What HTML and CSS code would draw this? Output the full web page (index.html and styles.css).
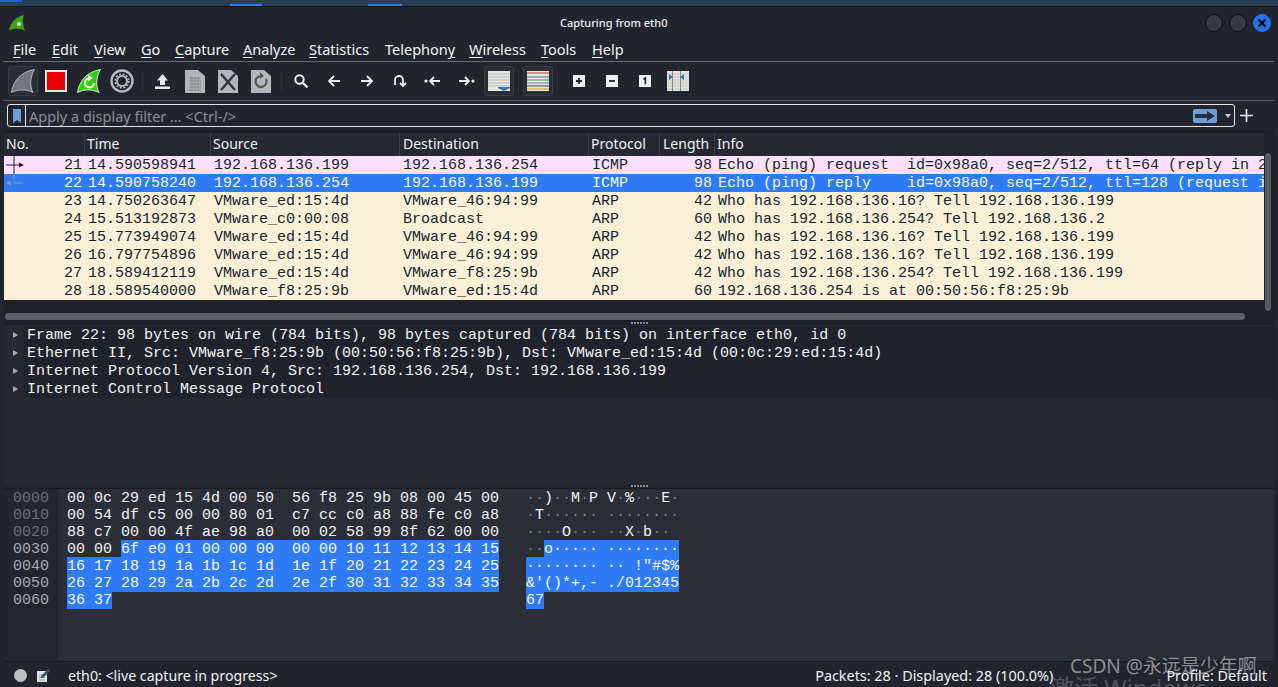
FILE: index.html
```html
<!DOCTYPE html>
<html lang="en">
<head>
<meta charset="utf-8">
<title>Capturing from eth0</title>
<link rel="stylesheet" href="styles.css">
</head>
<body>
<div class="strip"><i class="s1"></i><i class="s2"></i><i class="s3"></i></div>
<div class="win">
  <div class="titlebar">
    <svg class="logo" width="16" height="16" viewBox="0 0 16 16"><path d="M0 15.500C1 9 6 2 15 0c-2 5-1 11 1 15.500C10 13 5 13 0 15.500z" fill="#3fa420"/><circle cx="10" cy="9" r="2" fill="#d8ecd2"/></svg>
    <span class="title">Capturing from eth0</span>
    <div class="wbtns"><span class="wbtn"></span><span class="wbtn"></span><span class="wbtn close"><svg width="10" height="10" viewBox="0 0 10 10"><path d="M1.500 1.500l7 7M8.500 1.500l-7 7" stroke="#000" stroke-width="2"/></svg></span></div>
  </div>
  <div class="menubar">
    <span><u>F</u>ile</span><span><u>E</u>dit</span><span><u>V</u>iew</span><span><u>G</u>o</span><span><u>C</u>apture</span><span><u>A</u>nalyze</span><span><u>S</u>tatistics</span><span>Telephon<u>y</u></span><span><u>W</u>ireless</span><span><u>T</u>ools</span><span><u>H</u>elp</span>
  </div>
  <div class="toolbar">
    <span class="tb framed first"><svg width="24" height="24" viewBox="0 0 24 24"><path d="M.5 23.500C2 13 9 3 23.500.5 19 8 18.500 17 22 23.500 15 20 7 20 .5 23.500z" fill="#74777d" stroke="#b5b6b9"/></svg></span>
    <span class="tb"><svg width="22" height="22" viewBox="0 0 22 22"><rect width="22" height="22" fill="#e8e8e8"/><rect x="2" y="2" width="18" height="18" fill="#e60000"/></svg></span>
    <span class="tb"><svg width="24" height="24" viewBox="0 0 24 24"><path d="M.5 23.500C2 13 9 3 23.500.5 19 8 18.500 17 22 23.500 15 20 7 20 .5 23.500z" fill="#2fd011" stroke="#d9e8d2"/><path d="M17 14a4.500 4.500 0 1 1-5-4.500" stroke="#eef8e8" stroke-width="2.200" fill="none"/><path d="M11 5.500l5 3.500-5 3.500z" fill="#eef8e8"/></svg></span>
    <span class="tb"><svg width="24" height="24" viewBox="0 0 24 24"><circle cx="12" cy="12" r="10.500" fill="none" stroke="#b9babd" stroke-width="2.400"/><circle cx="12" cy="12" r="5" fill="none" stroke="#b9babd" stroke-width="2"/><circle cx="12" cy="12" r="6.800" fill="none" stroke="#b9babd" stroke-width="1.600" stroke-dasharray="2 1.600"/></svg></span>
    <b class="sep"></b>
    <span class="tb"><svg width="15" height="15" viewBox="0 0 15 15"><path d="M7.500 0l5.500 6.500H10V11H5V6.500H2z M0 12.500h15V15H0z" fill="#e8e8e8"/></svg></span>
    <span class="tb"><svg width="20" height="24" viewBox="0 0 20 24"><path d="M0 1h13l7 6v17H0z" fill="#b4b6b9"/><path d="M4 9h12M4 12h12M4 15h12M4 18h12M4 21h12M7 8v14M10 8v14M13 8v14" stroke="#85878b" stroke-width="1"/></svg></span>
    <span class="tb"><svg width="20" height="24" viewBox="0 0 20 24"><path d="M0 1h13l7 6v17H0z" fill="#b4b6b9"/><path d="M3 5l14 16M17 5L3 21" stroke="#33353a" stroke-width="2.400"/></svg></span>
    <span class="tb"><svg width="20" height="24" viewBox="0 0 20 24"><path d="M0 1h13l7 6v17H0z" fill="#b4b6b9"/><path d="M15 10a5.500 5.500 0 1 1-5-3" stroke="#55575b" stroke-width="2.200" fill="none"/><path d="M9 3l4 4-4 3z" fill="#55575b"/></svg></span>
    <b class="sep"></b>
    <span class="tb"><svg width="16" height="16" viewBox="0 0 16 16"><circle cx="6.500" cy="6.500" r="4.200" fill="none" stroke="#eee" stroke-width="2"/><path d="M10 10l4.500 4.500" stroke="#eee" stroke-width="2.400"/></svg></span>
    <span class="tb"><svg width="14" height="14" viewBox="0 0 14 14"><path d="M13 7H2M7 2L2 7l5 5" fill="none" stroke="#eee" stroke-width="1.800"/></svg></span>
    <span class="tb"><svg width="14" height="14" viewBox="0 0 14 14"><path d="M1 7h11M7 2l5 5-5 5" fill="none" stroke="#eee" stroke-width="1.800"/></svg></span>
    <span class="tb"><svg width="14" height="14" viewBox="0 0 14 14"><path d="M2 11V6a4 4 0 0 1 8 0v5M7 9l3 3 3-3" fill="none" stroke="#eee" stroke-width="1.800"/></svg></span>
    <span class="tb"><svg width="18" height="14" viewBox="0 0 18 14"><circle cx="2" cy="7" r="1.600" fill="#eee"/><path d="M16 7H6M10 3L6 7l4 4" fill="none" stroke="#eee" stroke-width="1.800"/></svg></span>
    <span class="tb"><svg width="18" height="14" viewBox="0 0 18 14"><circle cx="16" cy="7" r="1.600" fill="#eee"/><path d="M2 7h10M8 3l4 4-4 4" fill="none" stroke="#eee" stroke-width="1.800"/></svg></span>
    <span class="tb framed big"><svg width="22" height="20" viewBox="0 0 22 20"><rect width="22" height="20" fill="#e6e6df"/><path d="M0 3h22M0 6h22M0 9h22M0 12h22M0 15h22" stroke="#bdbdb6"/><path d="M10 16h12v1l-6 3-6-3z" fill="#3a6fb5"/></svg></span>
    <b class="sep wide"></b>
    <span class="tb framed"><svg width="22" height="20" viewBox="0 0 22 20"><rect width="22" height="20" fill="#e6e6df"/><path d="M0 2h22" stroke="#d33"/><path d="M0 6h22" stroke="#3a6fb5"/><path d="M0 9h22" stroke="#3a9a3a"/><path d="M0 12h22" stroke="#8a6fb5"/><path d="M0 15h22" stroke="#444"/><path d="M0 18h22" stroke="#c89a10"/></svg></span>
    <b class="sep wide"></b>
    <span class="tb"><svg width="12" height="12" viewBox="0 0 12 12"><rect width="12" height="12" fill="#eee"/><path d="M3 6h6M6 3v6" stroke="#222" stroke-width="1.800"/></svg></span>
    <span class="tb"><svg width="12" height="12" viewBox="0 0 12 12"><rect width="12" height="12" fill="#eee"/><path d="M3 6h6" stroke="#222" stroke-width="1.800"/></svg></span>
    <span class="tb"><svg width="12" height="12" viewBox="0 0 12 12"><rect width="12" height="12" fill="#eee"/><path d="M4.400 4.200L6.400 3v6.200" stroke="#222" stroke-width="1.600" fill="none"/></svg></span>
    <span class="tb"><svg width="22" height="20" viewBox="0 0 22 20"><rect width="22" height="20" fill="#e6e6df"/><path d="M0 3h22M0 6h22M0 9h22M0 12h22M0 15h22M0 18h22" stroke="#c4c4bc"/><path d="M5.500 0v20M13.500 0v20" stroke="#888" stroke-width="1"/><path d="M2 3l4 3-4 3zM17 3l-4 3 4 3z" fill="#3a6fb5"/></svg></span>
  </div>
  <div class="filterrow">
    <div class="filter">
      <span class="bookmark"><svg width="8" height="14" viewBox="0 0 8 14"><path d="M0 0h8v14L4 11l-4 3z" fill="#6d9fd6"/></svg></span>
      <span class="ph">Apply a display filter … &lt;Ctrl-/&gt;</span>
      <span class="apply"><svg width="20" height="10" viewBox="0 0 20 10"><path d="M0 3h12V0l8 5-8 5V7H0z" fill="#26303f"/></svg></span>
      <span class="drop"></span>
    </div>
    <svg class="plus" width="13" height="13" viewBox="0 0 13 13"><path d="M6.500 0v13M0 6.500h13" stroke="#eee" stroke-width="1.600"/></svg>
  </div>
  <div class="plist">
    <div class="pmain">
      <div class="head">
        <span>No.</span><span>Time</span><span>Source</span><span>Destination</span><span>Protocol</span><span>Length</span><span>Info</span>
      </div>
      <div class="row icmp"><span class="no"><svg class="mark" width="20" height="18" viewBox="0 0 20 18"><path d="M9 0v18M1 9h16" stroke="#222" stroke-width="1"/><path d="M14 6.500l5 2.500-5 2.500z" fill="#222"/></svg>21</span><span>14.590598941</span><span>192.168.136.199</span><span>192.168.136.254</span><span>ICMP</span><span class="len">98</span><span>Echo (ping) request  id=0x98a0, seq=2/512, ttl=64 (reply in 22)</span></div>
      <div class="row sel"><span class="no"><svg class="mark" width="20" height="18" viewBox="0 0 20 18"><path d="M9 0v9H18" stroke="#8c99ad" stroke-width="1" fill="none"/><path d="M6 6.500l-5 2.500 5 2.500z" fill="#8c99ad"/></svg>22</span><span>14.590758240</span><span>192.168.136.254</span><span>192.168.136.199</span><span>ICMP</span><span class="len">98</span><span>Echo (ping) reply    id=0x98a0, seq=2/512, ttl=128 (request in 21)</span></div>
      <div class="row"><span class="no">23</span><span>14.750263647</span><span>VMware_ed:15:4d</span><span>VMware_46:94:99</span><span>ARP</span><span class="len">42</span><span>Who has 192.168.136.16? Tell 192.168.136.199</span></div>
      <div class="row"><span class="no">24</span><span>15.513192873</span><span>VMware_c0:00:08</span><span>Broadcast</span><span>ARP</span><span class="len">60</span><span>Who has 192.168.136.254? Tell 192.168.136.2</span></div>
      <div class="row"><span class="no">25</span><span>15.773949074</span><span>VMware_ed:15:4d</span><span>VMware_46:94:99</span><span>ARP</span><span class="len">42</span><span>Who has 192.168.136.16? Tell 192.168.136.199</span></div>
      <div class="row"><span class="no">26</span><span>16.797754896</span><span>VMware_ed:15:4d</span><span>VMware_46:94:99</span><span>ARP</span><span class="len">42</span><span>Who has 192.168.136.16? Tell 192.168.136.199</span></div>
      <div class="row"><span class="no">27</span><span>18.589412119</span><span>VMware_ed:15:4d</span><span>VMware_f8:25:9b</span><span>ARP</span><span class="len">42</span><span>Who has 192.168.136.254? Tell 192.168.136.199</span></div>
      <div class="row"><span class="no">28</span><span>18.589540000</span><span>VMware_f8:25:9b</span><span>VMware_ed:15:4d</span><span>ARP</span><span class="len">60</span><span>192.168.136.254 is at 00:50:56:f8:25:9b</span></div>
      <div class="scroll"><div class="thumb"></div></div>
    </div>
    <div class="vbar"><div class="vthumb"></div></div>
  </div>
  <div class="grip"></div>
  <div class="details">
    <div class="dl"><i class="arrow"></i><span>Frame 22: 98 bytes on wire (784 bits), 98 bytes captured (784 bits) on interface eth0, id 0</span></div>
    <div class="dl"><i class="arrow"></i><span>Ethernet II, Src: VMware_f8:25:9b (00:50:56:f8:25:9b), Dst: VMware_ed:15:4d (00:0c:29:ed:15:4d)</span></div>
    <div class="dl"><i class="arrow"></i><span>Internet Protocol Version 4, Src: 192.168.136.254, Dst: 192.168.136.199</span></div>
    <div class="dl"><i class="arrow"></i><span>Internet Control Message Protocol</span></div>
  </div>
  <div class="grip g2"></div>
  <div class="hex">
    <div class="offs"><div>0000</div><div>0010</div><div>0020</div><div class="on">0030</div><div class="on">0040</div><div class="on">0050</div><div class="on">0060</div></div>
    <div class="bytes">
      <div>00 0c 29 ed 15 4d 00 50  56 f8 25 9b 08 00 45 00</div>
      <div>00 54 df c5 00 00 80 01  c7 cc c0 a8 88 fe c0 a8</div>
      <div>88 c7 00 00 4f ae 98 a0  00 02 58 99 8f 62 00 00</div>
      <div>00 00 <mark>6f e0 01 00 00 00  00 00 10 11 12 13 14 15</mark></div>
      <div><mark>16 17 18 19 1a 1b 1c 1d  1e 1f 20 21 22 23 24 25</mark></div>
      <div><mark>26 27 28 29 2a 2b 2c 2d  2e 2f 30 31 32 33 34 35</mark></div>
      <div><mark>36 37</mark></div>
    </div>
    <div class="ascii">
      <div><s>··</s>)<s>··</s>M<s>·</s>P V<s>·</s>%<s>···</s>E<s>·</s></div>
      <div><s>·</s>T<s>······</s> <s>········</s></div>
      <div><s>····</s>O<s>···</s> <s>··</s>X<s>·</s>b<s>··</s></div>
      <div><s>··</s><mark>o····· ········</mark></div>
      <div><mark>········ ·· !"#$%</mark></div>
      <div><mark>&amp;'()*+,- ./012345</mark></div>
      <div><mark>67</mark></div>
    </div>
  </div>
  <div class="status">
    <span class="led"></span>
    <svg class="note" width="13" height="13" viewBox="0 0 13 13"><rect y="2" width="10" height="11" fill="#dfe3e6"/><path d="M2 6h6M2 8.500h6M2 11h6" stroke="#9aa"/><path d="M4 7l7-7 2 2-7 7H4z" fill="#3d5568"/></svg>
    <span class="cap">eth0: &lt;live capture in progress&gt;</span>
    <span class="pk">Packets: 28 · Displayed: 28 (100.0%)</span>
    <span class="pf">Profile: Default</span>
  </div>
</div>
<div class="wm2">激活 Windows</div>
<div class="wm">CSDN @永远是少年啊</div>
</body>
</html>
```
FILE: styles.css
```css
* { box-sizing: border-box; }
html, body { margin: 0; height: 100%; overflow: hidden; }
body {
  position: relative;
  width: 1278px; height: 687px;
  background: #1d2027;
  font-family: "Noto Sans", sans-serif;
  color: #f0f2f4;
  display: flex; flex-direction: column;
}
.strip { height: 7px; background: #2a3f55; border-bottom: 1px solid #14161b; display: flex; position: relative; flex: none; }
.strip i { height: 2px; background: #2a78f0; margin-top: 4px; }
.strip .s1 { width: 22px; margin-left: 0; margin-top: 0; background: #1e60d0; }
.s2 { width: 32px; margin-left: 208px; }
.s3 { width: 34px; margin-left: 106px; }
.win { flex: 1; min-height: 0; background: #23252e; padding-left: 3px; padding-right: 4px; display: flex; flex-direction: column; }

.titlebar { height: 31px; display: flex; align-items: center; position: relative; flex: none; padding-left: 6px; }
.title { position: absolute; left: 557px; top: 8px; font-size: 11px; line-height: 16px; font-weight: 500; color: #eceff3; }
.wbtns { margin-left: auto; display: flex; gap: 6px; margin-right: 3px; }
.wbtn { width: 18px; height: 18px; border-radius: 50%; background: #353845; border: 1px solid #0c0d11; display: flex; align-items: center; justify-content: center; }
.wbtn.close { background: #2473f2; border-color: #2473f2; }

.menubar { height: 24px; display: grid; grid-template-columns: 39px 42px 47px 34px 68px 66px 76px 84px 72px 51px auto; justify-content: start; padding-left: 10px; font-size: 14.500px; line-height: 22px; border-bottom: 1px solid #6b6c72; color: #f2f3f5; flex: none; white-space: nowrap; }
.menubar u { text-underline-offset: 2px; text-decoration-thickness: 1px; }

.toolbar { height: 39px; display: flex; align-items: center; padding-left: 5px; border-bottom: 1px solid #56585e; flex: none; }
.tb { width: 33px; height: 30px; display: flex; align-items: center; justify-content: center; flex: none; }
.framed { background: #2a2d36; border: 1px solid #3a3d47; border-radius: 3px; width: 30px; }
.first { margin-right: 1.500px; }
.big { margin-left: 1.500px; }
.sep { width: 1px; height: 22px; background: #2e3039; margin: 0 3px; flex: none; }
.wide { margin: 0 4px; }

.filterrow { height: 29px; display: flex; align-items: center; gap: 5px; padding-left: 4px; flex: none; }
.filter { width: 1228px; height: 23px; border: 1px solid #e4e5e8; border-radius: 3px; display: flex; align-items: center; background: #23252e; }
.bookmark { width: 18px; height: 21px; border-right: 1px solid #e4e5e8; display: flex; align-items: center; justify-content: center; flex: none; }
.ph { margin-left: 3px; font-size: 14.500px; line-height: 22px; color: #8c8e94; flex: 1; white-space: nowrap; }
.apply { width: 24px; height: 14px; background: #6d9fd6; border-radius: 2px; display: flex; align-items: center; justify-content: center; }
.drop { width: 0; height: 0; margin: 0 3px 0 8px; border: 3.500px solid transparent; border-top: 4px solid #c9cacd; border-bottom: 0; }
.plus { flex: none; }

.plist { flex: none; margin-left: 1px; height: 194px; padding-top: 3px; background: #1e2128; display: flex; }
.pmain { width: 1260px; flex: none; display: flex; flex-direction: column; }
.vbar { width: 8px; flex: none; padding: 20px 1px 13px 1px; }
.vthumb { height: 100%; border-radius: 3px; background: #595b61; }
.head { height: 23px; display: grid; grid-template-columns: 81px 126px 189px 189px 71px 55px 1fr; font-size: 14px; line-height: 22px; background: #262931; flex: none; }
.head span { padding-left: 2px; border-right: 1px solid #3b3e47; white-space: nowrap; overflow: hidden; }
.head span:nth-child(4), .head span:nth-child(6) { padding-left: 3px; }
.head span:last-child { border: 0; }
.row { height: 18px; display: grid; grid-template-columns: 81px 126px 189px 189px 71px 55px 1fr; background: #faf0d7; color: #12272e; font: 15px/20px "Liberation Mono", monospace; white-space: pre; overflow: hidden; flex: none; }
.row span { padding-left: 3px; overflow: hidden; }
.row .no { position: relative; text-align: right; padding-right: 3px; padding-left: 0; }
.row .len { text-align: right; padding: 0 3px 0 0; }
.mark { position: absolute; left: 1px; top: 0; }
.icmp { background: #fce0ff; }
.sel { background: #2e7bf5; color: #f4f8ff; }
.scroll { height: 24px; padding: 13px 19px 4px 1px; flex: none; }
.thumb { height: 7px; border-radius: 4px; background: #5f6167; }

.grip { height: 0; position: relative; flex: none; }
.grip::after { content: ""; position: absolute; left: 628px; top: -2px; width: 18px; height: 2px; background: repeating-linear-gradient(90deg, #8a8c91 0 2px, transparent 2px 3px); }
.details { height: 161px; margin-left: 1px; background: #262932; padding: 1px 0 0 0; border-top: 1px solid #1b1d23; flex: none; }
.dl { height: 18px; display: flex; font: 15px/20px "Liberation Mono", monospace; white-space: pre; color: #f0f2f4; padding-left: 20px; position: relative; background: linear-gradient(90deg, #262932 20px, #20232b 20px); }
.dl span { padding-left: 3px; }
.arrow { position: absolute; left: 9px; top: 6px; border-left: 5px solid #a9abb0; border-top: 3.500px solid transparent; border-bottom: 3.500px solid transparent; }

.g2::after { top: 0; left: 628px; }
.hex { height: 173px; margin: 3px 0 0 1px; display: flex; background: #2b2d37; font: 15px/19px "Liberation Mono", monospace; border-top: 1px solid #1b1d23; flex: none; }
.hex > div > div { white-space: pre; height: 17px; }
.offs { width: 54px; padding-left: 9px; background: #24262f; color: #6c6e74; }
.offs .on { color: #a8aab0; }
.bytes { width: 459px; padding-left: 9px; color: #f0f2f4; }
.ascii { padding-left: 9px; color: #f0f2f4; }
mark { background: #2e7bf5; color: #f4f8ff; }
.hex mark { display: inline-block; height: 18px; line-height: 19px; vertical-align: top; }
.ascii s { text-decoration: none; color: #74767c; }

.status { flex: 1; min-height: 0; display: flex; align-items: center; padding-top: 1px; font-size: 14.400px; color: #f0f2f4; border-top: 1px solid #17191e; margin-left: 1px; position: relative; white-space: nowrap; }
.led { width: 13px; height: 13px; border-radius: 50%; background: #bdbfc1; margin-left: 10px; flex: none; }
.note { margin-left: 10px; flex: none; }
.cap { margin-left: 18px; font-size: 14.200px; }
.pk { margin-left: auto; }
.pf { margin-left: 113px; margin-right: 7px; }
.wm { position: absolute; left: 1070px; top: 654px; font: 19px/24px "Noto Sans", "Noto Sans CJK SC", sans-serif; color: rgba(215,215,218,.6); white-space: nowrap; }
.wm2 { position: absolute; left: 1050px; top: 674px; font: 24px/28px "Noto Sans", "Noto Sans CJK SC", sans-serif; color: rgba(200,200,200,.3); white-space: nowrap; }
```
